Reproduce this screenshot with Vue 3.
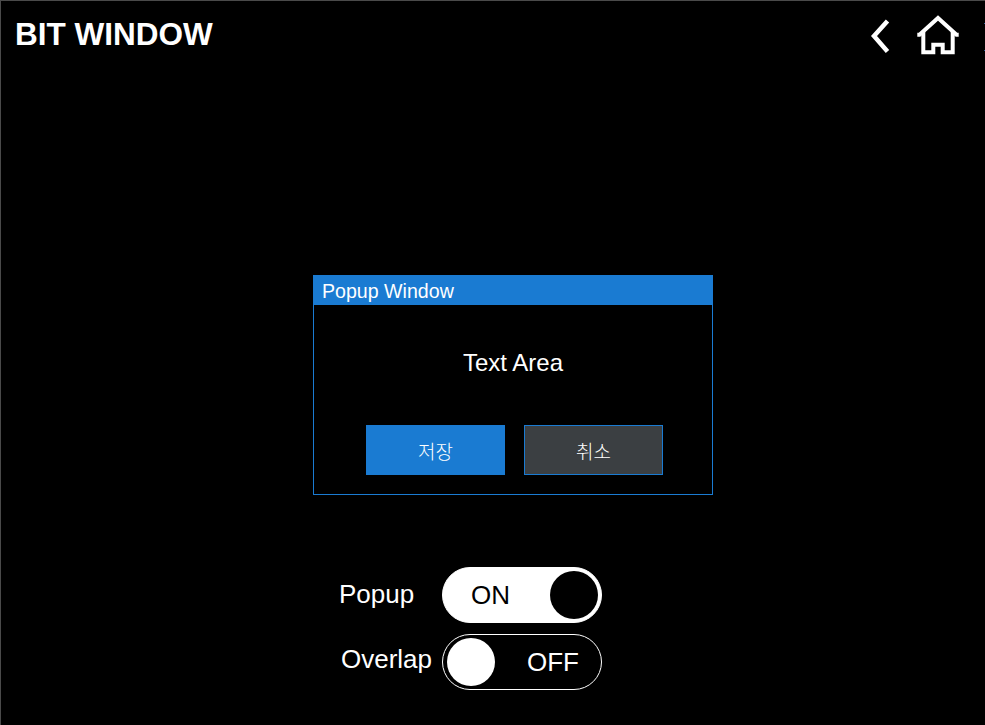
<template>
  <div class="screen">
    <header class="top-bar">
      <h1 class="title">BIT WINDOW</h1>
      <nav class="top-icons">
        <svg class="icon-back" width="24" height="40" viewBox="0 0 24 40">
          <polyline points="18.5,4 5,19 18.5,34.5" fill="none" stroke="#fff" stroke-width="4.5" />
        </svg>
        <svg class="icon-home" width="46" height="44" viewBox="0 0 46 44">
          <path d="M2.3 22.7 H4.5 L23 6 L41.5 22.7 H43.7" fill="none" stroke="#fff" stroke-width="4" />
          <path d="M8.3 20 V40.3 H18.3 V32.7 H27.7 V40.3 H37.7 V20" fill="none" stroke="#fff" stroke-width="4" />
        </svg>
        <span class="icon-cut"></span>
      </nav>
    </header>

    <main class="content">
      <section class="popup-slot">
        <div v-if="popupOn" class="popup">
          <div class="popup-title">Popup Window</div>
          <div class="popup-text">Text Area</div>
          <div class="popup-actions">
            <button class="btn btn-save">저장</button>
            <button class="btn btn-cancel">취소</button>
          </div>
        </div>
      </section>

      <section class="switches">
        <div class="switch-row">
          <span class="switch-label label-popup">Popup</span>
          <button class="toggle" :class="{ on: popupOn }" @click="popupOn = !popupOn">
            <span class="knob"></span>
            <span class="toggle-text">{{ popupOn ? 'ON' : 'OFF' }}</span>
          </button>
        </div>
        <div class="switch-row">
          <span class="switch-label label-overlap">Overlap</span>
          <button class="toggle" :class="{ on: overlapOn }" @click="overlapOn = !overlapOn">
            <span class="knob"></span>
            <span class="toggle-text">{{ overlapOn ? 'ON' : 'OFF' }}</span>
          </button>
        </div>
      </section>
    </main>
  </div>
</template>

<script setup>
import { ref } from 'vue'

const popupOn = ref(true)
const overlapOn = ref(false)
</script>

<style>
html,
body {
  margin: 0;
  background: #000;
}
</style>

<style scoped>
.screen {
  box-sizing: border-box;
  width: 985px;
  height: 725px;
  overflow: hidden;
  background: #000;
  border-top: 1px solid #4a4a4a;
  border-left: 1px solid #4a4a4a;
  color: #fff;
  font-family: "Liberation Sans", Arial, sans-serif;
}

.top-bar {
  display: flex;
  align-items: flex-start;
  justify-content: space-between;
  height: 274px;
}

.title {
  margin: 15px 0 0 14px;
  font-size: 31.5px;
  line-height: 36px;
  font-weight: 700;
}

.top-icons {
  display: flex;
  align-items: flex-start;
}

.icon-back {
  margin-top: 16px;
}

.icon-home {
  margin: 11px 23px 0 22px;
}

.icon-cut {
  width: 1px;
  height: 26px;
  margin-top: 22px;
  border-top: 1px solid #2a5f9a;
  border-bottom: 1px solid #2a5f9a;
}

.content {
  display: flex;
  flex-direction: column;
}

.popup-slot {
  height: 292px;
  padding-left: 312px;
}

.popup {
  box-sizing: border-box;
  width: 400px;
  height: 220px;
  border: 1px solid #1a7bd2;
}

.popup-title {
  height: 30px;
  margin: -1px -1px 0;
  padding-left: 9px;
  background: #1a7bd2;
  font-size: 19.6px;
  line-height: 33px;
}

.popup-text {
  margin-top: 44px;
  font-size: 24px;
  line-height: 28px;
  text-align: center;
}

.popup-actions {
  display: flex;
  gap: 19px;
  margin: 48px 0 0 52px;
}

.btn {
  box-sizing: border-box;
  width: 139px;
  height: 50px;
  padding: 0;
  border: 1px solid #1a7bd2;
  color: #fff;
  font-family: "Liberation Sans", "Noto Sans CJK KR", sans-serif;
  font-size: 19px;
  font-weight: 300;
}

.btn-save {
  background: #1a7bd2;
}

.btn-cancel {
  background: #3b3f42;
}

.switches {
  display: flex;
  flex-direction: column;
  gap: 11px;
  padding-left: 339px;
}

.switch-row {
  display: flex;
  align-items: center;
}

.switch-label {
  box-sizing: border-box;
  width: 102px;
  font-size: 26px;
}

.label-popup {
  margin-left: -1px;
  width: 103px;
  padding-bottom: 2px;
}

.label-overlap {
  padding-left: 1px;
  padding-bottom: 6px;
}

.toggle {
  display: flex;
  align-items: center;
  box-sizing: border-box;
  width: 160px;
  height: 56px;
  padding: 0 4px;
  border: 1px solid #fff;
  border-radius: 28px;
  background: #000;
  color: #fff;
  font-family: "Liberation Sans", Arial, sans-serif;
  font-size: 26px;
}

.toggle-text {
  margin-left: 32px;
}

.knob {
  width: 48px;
  height: 48px;
  border-radius: 50%;
  background: #fff;
}

.toggle.on {
  flex-direction: row-reverse;
  justify-content: space-between;
  padding-right: 3px;
  background: #fff;
  color: #000;
}

.toggle.on .toggle-text {
  margin-left: 24px;
}

.toggle.on .knob {
  background: #000;
}
</style>
